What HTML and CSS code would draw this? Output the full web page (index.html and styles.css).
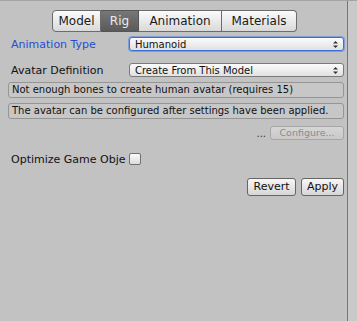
FILE: index.html
```html
<!DOCTYPE html>
<html>
<head>
<title>Import Settings - Rig</title>
<link rel="stylesheet" href="styles.css">
</head>
<body>
<div class="window">
  <div class="inspector">
    <div class="tabs">
      <div class="tab tab-model">Model</div>
      <div class="tab tab-rig active">Rig</div>
      <div class="tab tab-anim">Animation</div>
      <div class="tab tab-mat">Materials</div>
    </div>

    <div class="row row-type">
      <div class="label focus">Animation Type</div>
      <div class="popup focused">
        <span>Humanoid</span>
        <svg class="arrows" width="5" height="7" viewBox="0 0 5 7"><path d="M2.5 0 L5 2.5 L0 2.5 Z M0 4.5 L5 4.5 L2.5 7 Z" fill="#333"/></svg>
      </div>
    </div>

    <div class="row row-avatar">
      <div class="label">Avatar Definition</div>
      <div class="popup">
        <span>Create From This Model</span>
        <svg class="arrows" width="5" height="7" viewBox="0 0 5 7"><path d="M2.5 0 L5 2.5 L0 2.5 Z M0 4.5 L5 4.5 L2.5 7 Z" fill="#333"/></svg>
      </div>
    </div>

    <div class="helpbox first">Not enough bones to create human avatar (requires 15)</div>
    <div class="helpbox">The avatar can be configured after settings have been applied.</div>

    <div class="row row-config">
      <span class="dots">...</span>
      <div class="btn disabled configure">Configure...</div>
    </div>

    <div class="row row-opt">
      <div class="label">Optimize Game Obje</div>
      <div class="checkbox"></div>
    </div>

    <div class="row row-apply">
      <div class="btn revert">Revert</div>
      <div class="btn apply">Apply</div>
    </div>
  </div>
  <div class="sidebar"></div>
</div>
</body>
</html>
```

FILE: styles.css
```css
html, body {
    margin: 0;
    padding: 0;
}
body {
    width: 357px;
    height: 321px;
    background: #c2c2c2;
    font-family: "DejaVu Sans", Verdana, sans-serif;
    color: #111;
    overflow: hidden;
}
.window {
    display: flex;
    height: 321px;
    border-top: 1px solid #a4a4a4;
    box-sizing: border-box;
}
.inspector {
    width: 347px;
    padding: 9px 3px 0 8px;
    box-sizing: border-box;
}
.sidebar {
    width: 10px;
    border-left: 1px solid #4a7ec4;
    background: #c9c9c9;
    box-sizing: border-box;
}

/* toolbar tabs */
.tabs {
    display: flex;
    margin-left: 44px;
    height: 22px;
}
.tab {
    height: 22px;
    box-sizing: border-box;
    border: 1px solid #6c6c6c;
    border-left: none;
    background: linear-gradient(#fbfbfb, #d9d9d9);
    font-size: 12px;
    line-height: 20px;
    text-align: center;
    color: #1a1a1a;
}
.tab-model {
    width: 49px;
    border-left: 1px solid #6c6c6c;
    border-radius: 4px 0 0 4px;
}
.tab-rig { width: 38px; }
.tab-anim { width: 83px; }
.tab-mat {
    width: 75px;
    border-radius: 0 4px 4px 0;
}
.tab.active {
    background: linear-gradient(#777, #5a5a5a);
    color: #ececec;
    border-color: #555;
}

/* property rows */
.row {
    display: flex;
    align-items: center;
}
.label {
    width: 118px;
    padding-left: 3px;
    font-size: 11px;
    white-space: nowrap;
}
.label.focus {
    color: #1f4fd6;
}
.row-type { margin-top: 5px; height: 14px; }
.row-avatar { margin-top: 12px; height: 14px; }

.popup {
    flex: 1;
    height: 14px;
    box-sizing: border-box;
    border: 1px solid #7a7a7a;
    border-radius: 3px;
    background: linear-gradient(#fbfbfb, #e1e1e1);
    display: flex;
    align-items: center;
    justify-content: space-between;
    padding: 0 5px 0 5px;
    font-size: 10px;
    color: #111;
}
.popup.focused {
    border-color: #3a6fd8;
    box-shadow: 0 0 0 1px rgba(80, 130, 230, 0.55);
}
.arrows {
    display: block;
}

/* help boxes */
.helpbox {
    height: 16px;
    box-sizing: border-box;
    border: 1px solid #959595;
    border-radius: 3px;
    background: #c7c7c7;
    font-size: 10px;
    line-height: 14px;
    padding-left: 3px;
    margin-top: 5px;
    white-space: nowrap;
}

.row-config {
    justify-content: flex-end;
    margin-top: 7px;
    height: 14px;
}
.dots {
    font-size: 10px;
    color: #333;
    margin-right: 4px;
}

.btn {
    box-sizing: border-box;
    border: 1px solid #666;
    border-radius: 3px;
    background: linear-gradient(#f7f7f7, #d6d6d6);
    text-align: center;
    font-size: 11px;
    color: #111;
}
.btn.disabled {
    border-color: #a6a6a6;
    background: linear-gradient(#d6d6d6, #c9c9c9);
    color: #8a8a8a;
}
.configure {
    width: 74px;
    height: 14px;
    font-size: 9.5px;
    line-height: 12px;
}

.row-opt {
    margin-top: 13px;
    height: 12px;
}
.checkbox {
    width: 12px;
    height: 12px;
    box-sizing: border-box;
    border: 1px solid #707070;
    border-radius: 2px;
    background: linear-gradient(#fafafa, #dcdcdc);
}

.row-apply {
    justify-content: flex-end;
    margin-top: 13px;
    gap: 5px;
}
.revert {
    width: 49px;
    height: 18px;
    line-height: 16px;
}
.apply {
    width: 43px;
    height: 18px;
    line-height: 16px;
}
```
